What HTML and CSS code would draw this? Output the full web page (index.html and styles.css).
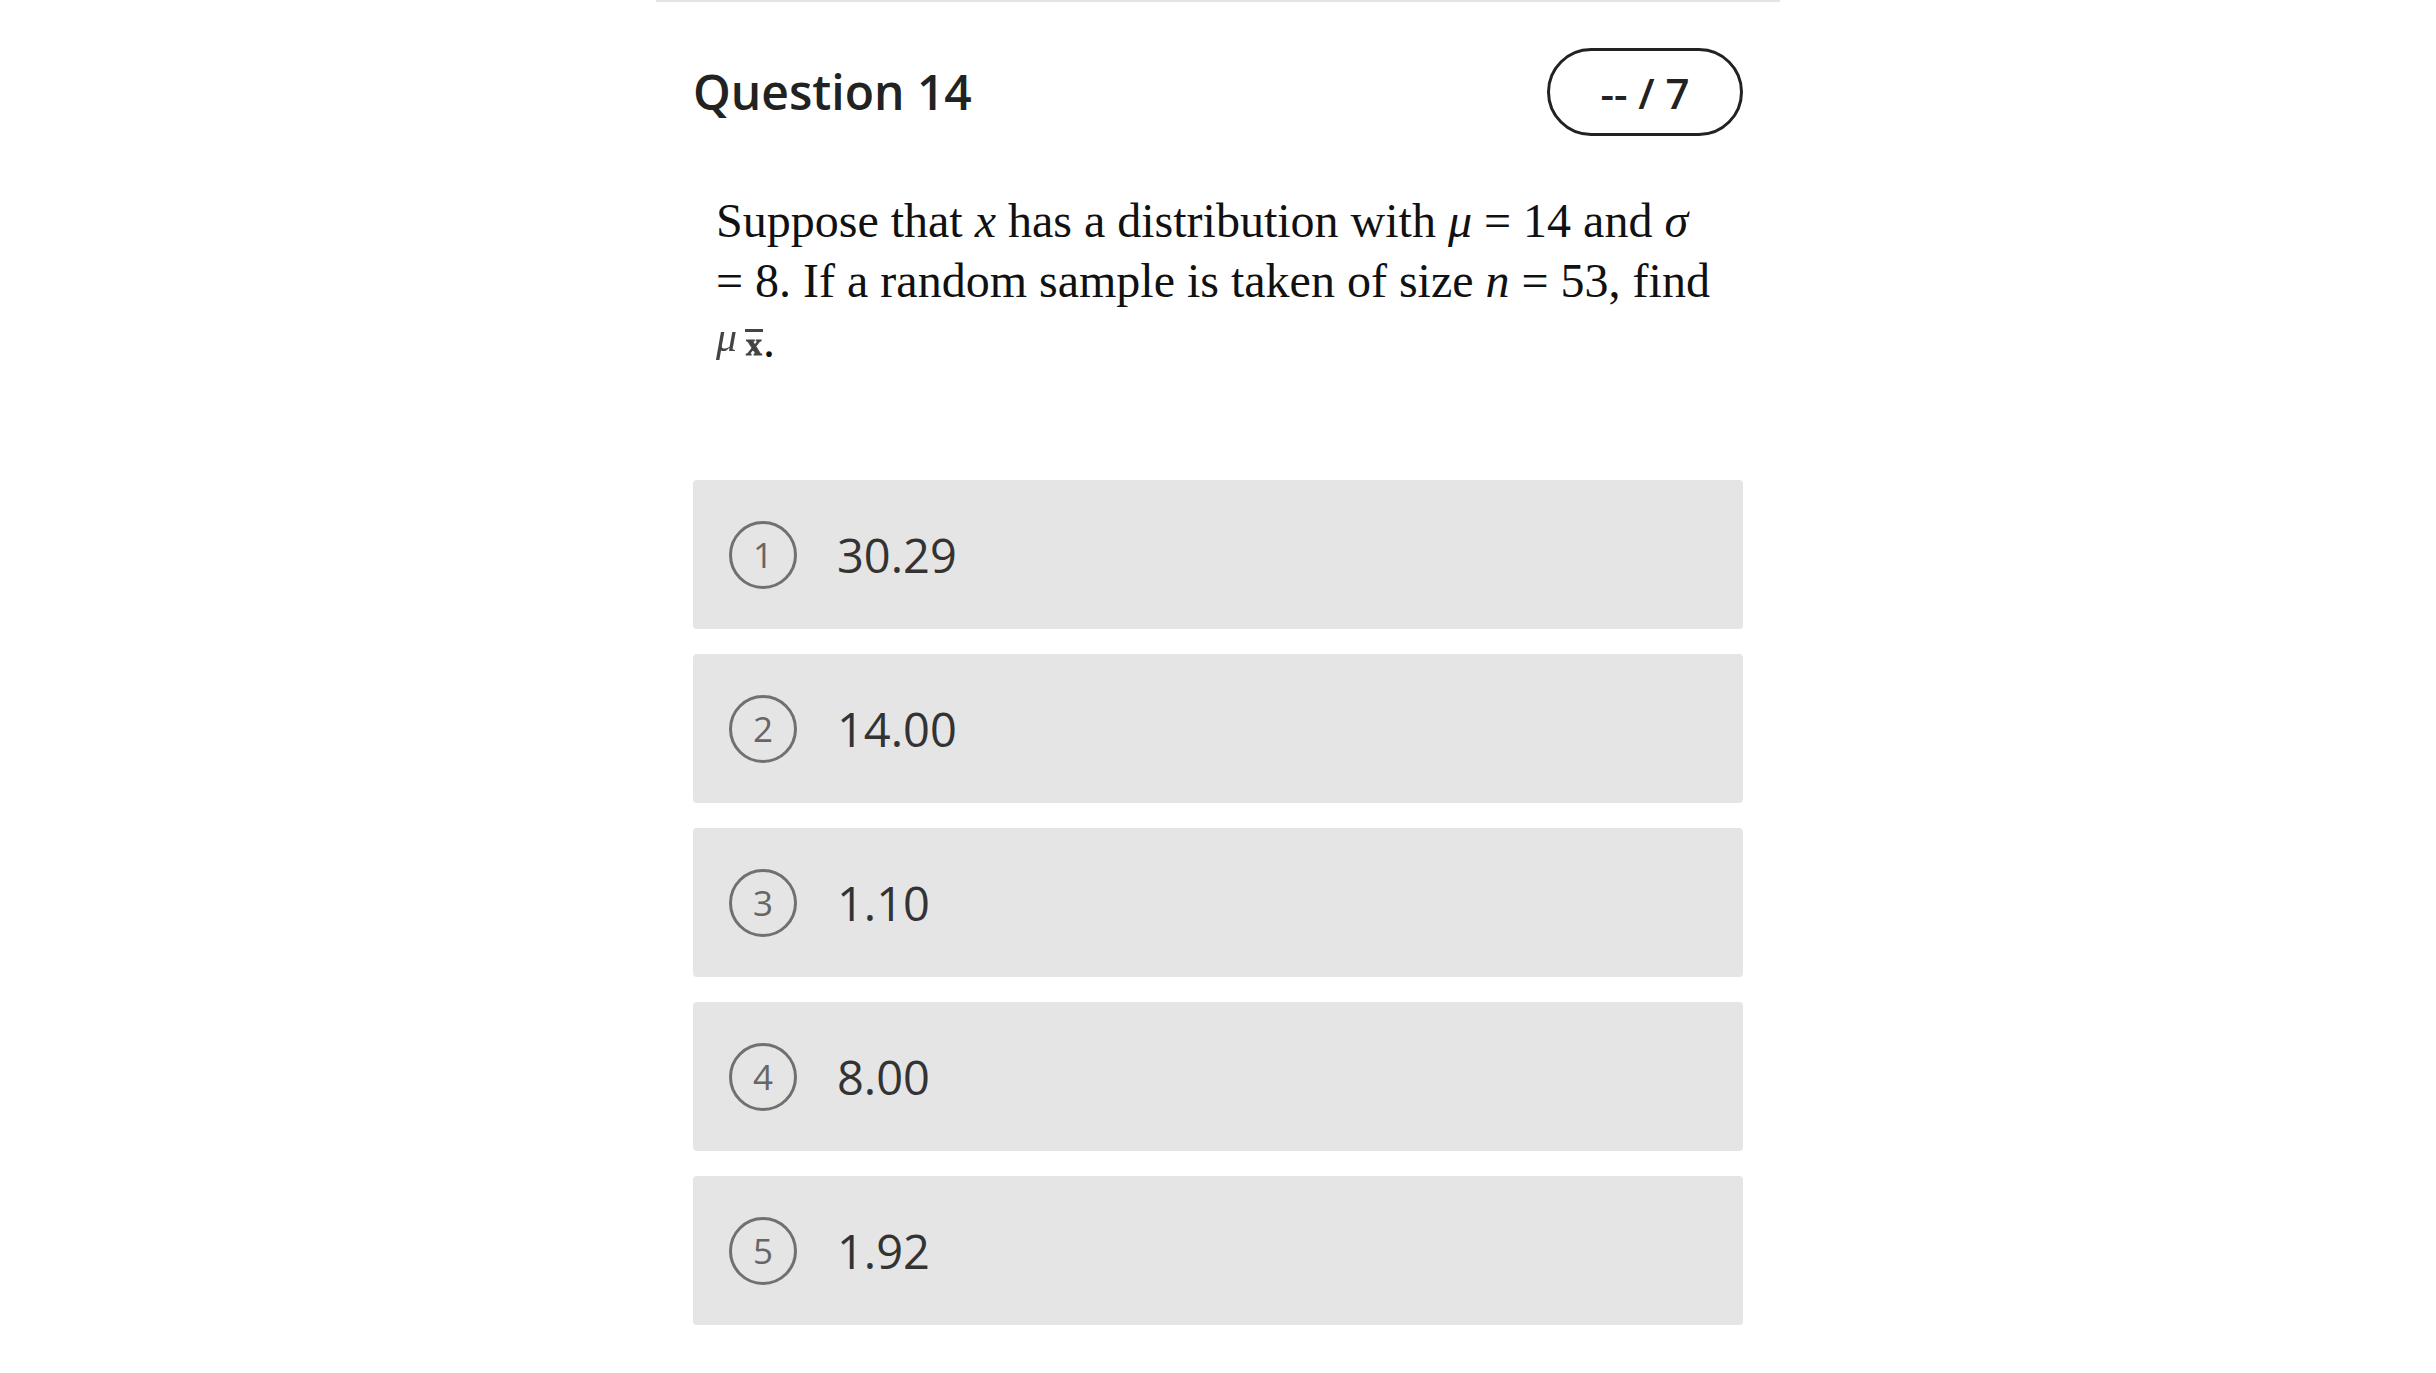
FILE: index.html
```html
<!DOCTYPE html>
<html lang="en">
<head>
<meta charset="utf-8">
<title>Question 14</title>
<link rel="stylesheet" href="styles.css">
</head>
<body>
<div class="page">
  <div class="inner">
    <div class="header">
      <h2 class="title">Question 14</h2>
      <div class="pill">-- / 7</div>
    </div>
    <p class="question">Suppose that <i>x</i> has a distribution with <i>μ</i> = 14 and <i>σ</i> = 8. If a random sample is taken of size <i>n</i> = 53, find <span class="mu-img"><span class="mu">μ</span><span class="xbar">x</span></span>.</p>
    <div class="options">
      <div class="option"><span class="circle">1</span><span class="answer">30.29</span></div>
      <div class="option"><span class="circle">2</span><span class="answer">14.00</span></div>
      <div class="option"><span class="circle">3</span><span class="answer">1.10</span></div>
      <div class="option"><span class="circle">4</span><span class="answer">8.00</span></div>
      <div class="option"><span class="circle">5</span><span class="answer">1.92</span></div>
    </div>
  </div>
</div>
</body>
</html>
```
FILE: styles.css
```css
html, body {
  margin: 0;
  padding: 0;
  background: #ffffff;
}
body {
  font-family: "Open Sans", "Liberation Sans", sans-serif;
  color: #222;
}
.page {
  width: 1124px;
  margin: 0 auto;
  border-top: 2px solid #e4e4e4;
}
.inner {
  padding: 0 37px 40px;
}
.header {
  display: flex;
  justify-content: space-between;
  align-items: center;
  margin-top: 46px;
}
.title {
  margin: 0;
  font-size: 48px;
  font-weight: 600;
  color: #222;
  line-height: 1.2;
}
.pill {
  box-sizing: border-box;
  width: 196px;
  height: 88px;
  border: 3px solid #222;
  border-radius: 44px;
  display: flex;
  align-items: center;
  justify-content: center;
  font-size: 42px;
  font-weight: 600;
  color: #222;
}
.question {
  margin: 55px 0 0;
  padding: 0 27px 0 23px;
  font-family: "Liberation Serif", "Times New Roman", serif;
  font-size: 48px;
  line-height: 60px;
  color: #111;
}
.mu-img {
  display: inline-block;
  font-family: "Liberation Serif", serif;
  line-height: 1;
  color: #444;
  filter: blur(0.4px);
}
.mu {
  font-style: italic;
  font-size: 42px;
  position: relative;
  top: -6px;
}
.xbar {
  font-weight: bold;
  font-size: 32px;
  -webkit-text-stroke: 0.8px #444;
  border-top: 3px solid #444;
  margin-left: 8px;
  line-height: 0.75;
  display: inline-block;
  position: relative;
  top: -2px;
  padding: 0 1px;
}
.options {
  margin-top: 109px;
  display: flex;
  flex-direction: column;
  gap: 25px;
}
.option {
  height: 149px;
  background: #e5e5e5;
  border-radius: 4px;
  display: flex;
  align-items: center;
  padding-left: 36px;
}
.circle {
  box-sizing: border-box;
  width: 68px;
  height: 68px;
  border: 3px solid #707070;
  border-radius: 50%;
  display: flex;
  align-items: center;
  justify-content: center;
  font-size: 35px;
  color: #666;
  flex-shrink: 0;
}
.answer {
  margin-left: 40px;
  font-size: 47px;
  color: #333;
}
```
